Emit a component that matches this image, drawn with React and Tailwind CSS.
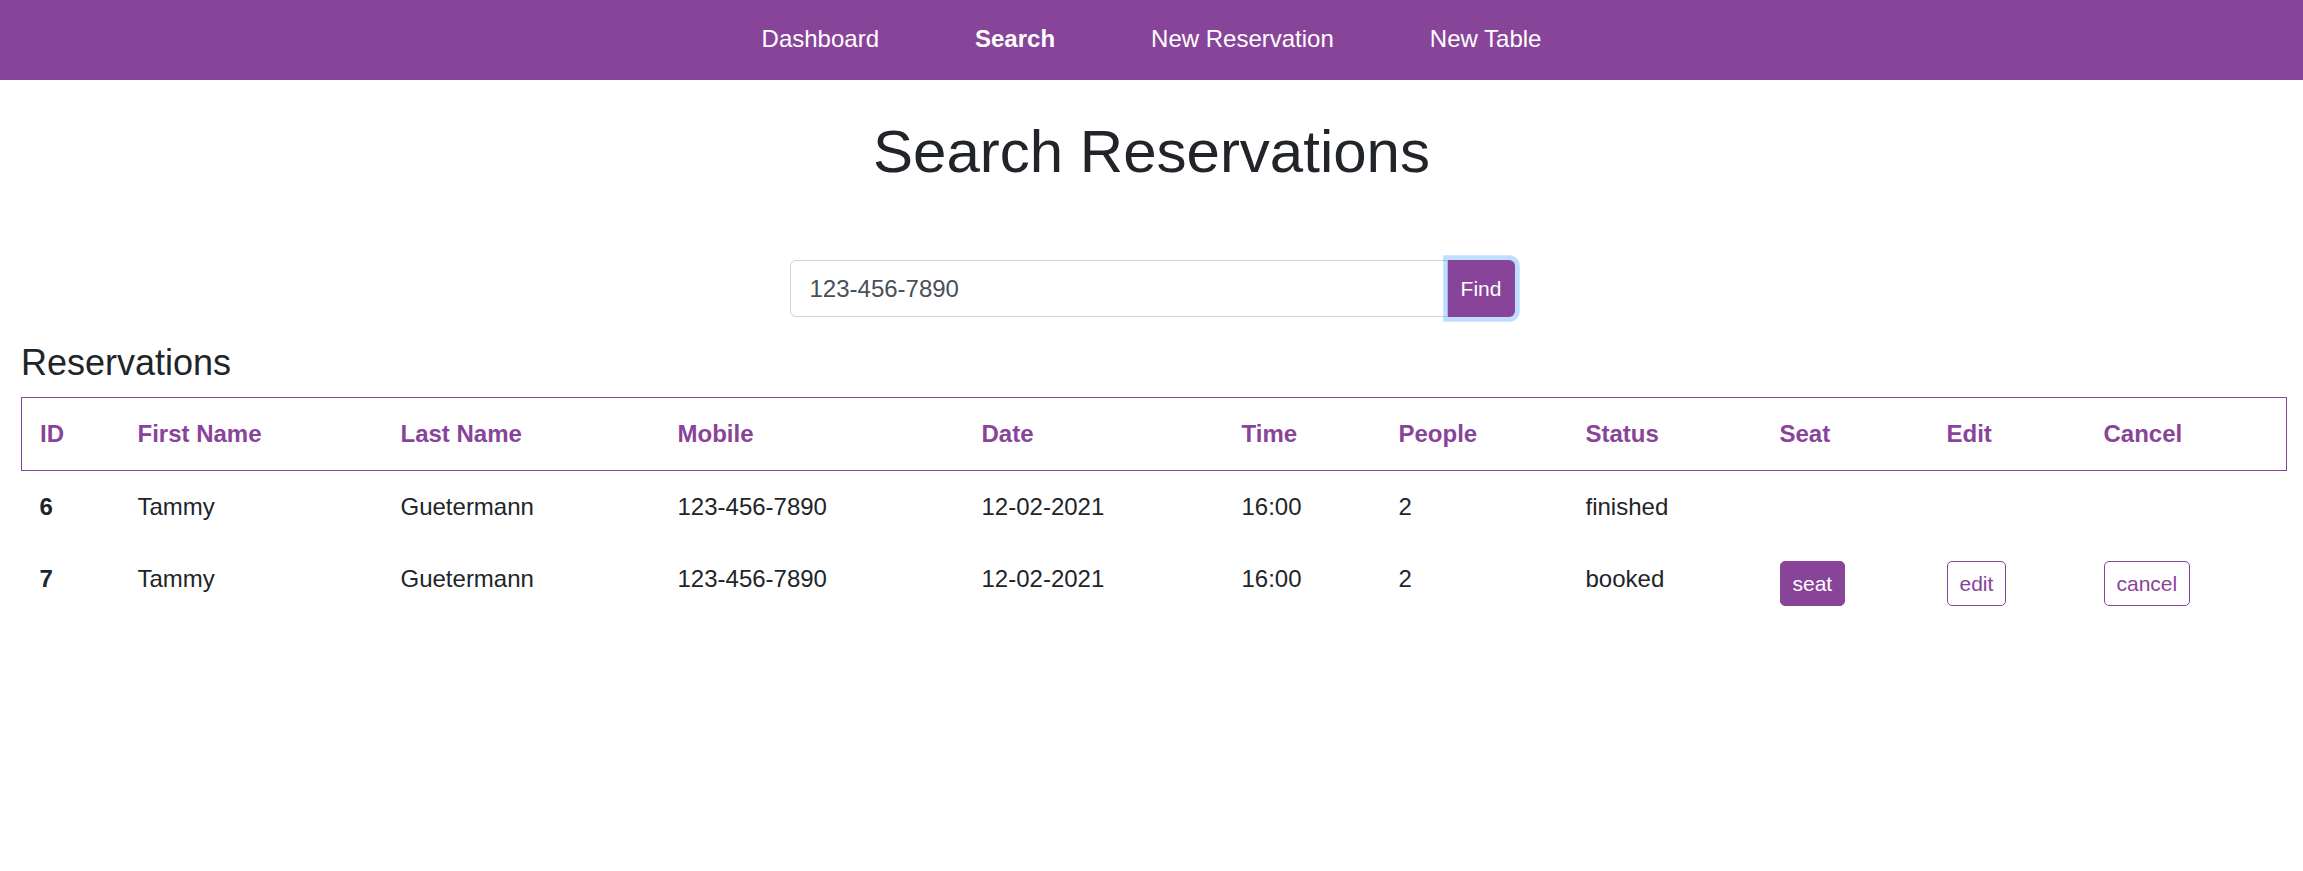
import React from "react";

const columns = [
  { label: "ID", w: "w-[98px]" },
  { label: "First Name", w: "w-[263px]" },
  { label: "Last Name", w: "w-[277px]" },
  { label: "Mobile", w: "w-[304px]" },
  { label: "Date", w: "w-[260px]" },
  { label: "Time", w: "w-[157px]" },
  { label: "People", w: "w-[187px]" },
  { label: "Status", w: "w-[194px]" },
  { label: "Seat", w: "w-[167px]" },
  { label: "Edit", w: "w-[157px]" },
  { label: "Cancel", w: "w-[201px]" },
];

const reservations = [
  { id: 6, first: "Tammy", last: "Guetermann", mobile: "123-456-7890", date: "12-02-2021", time: "16:00", people: 2, status: "finished" },
  { id: 7, first: "Tammy", last: "Guetermann", mobile: "123-456-7890", date: "12-02-2021", time: "16:00", people: 2, status: "booked" },
];

function NavBar() {
  const links = ["Dashboard", "Search", "New Reservation", "New Table"];
  return (
    <nav className="h-[80px] pb-[3px] bg-[#884499] flex items-center justify-center">
      {links.map((l) => (
        <a
          key={l}
          href="#"
          className={`px-[48px] text-[24px] leading-[36px] text-white ${l === "Search" ? "font-bold" : ""}`}
        >
          {l}
        </a>
      ))}
    </nav>
  );
}

function ReservationRow({ r }) {
  const cell = "px-[18px] py-[18px] align-top text-left";
  return (
    <tr>
      <th className={`${cell} font-bold`}>{r.id}</th>
      <td className={cell}>{r.first}</td>
      <td className={cell}>{r.last}</td>
      <td className={cell}>{r.mobile}</td>
      <td className={cell}>{r.date}</td>
      <td className={cell}>{r.time}</td>
      <td className={cell}>{r.people}</td>
      <td className={cell}>{r.status}</td>
      <td className={cell}>
        {r.status === "booked" && (
          <button className="px-[12px] py-[6px] text-[21px] leading-[31px] bg-[#884499] border border-[#884499] text-white rounded-[5px]">
            seat
          </button>
        )}
      </td>
      <td className={cell}>
        {r.status === "booked" && (
          <button className="px-[12px] py-[6px] text-[21px] leading-[31px] bg-white border border-[#884499] text-[#884499] rounded-[5px]">
            edit
          </button>
        )}
      </td>
      <td className={cell}>
        {r.status === "booked" && (
          <button className="px-[12px] py-[6px] text-[21px] leading-[31px] bg-white border border-[#884499] text-[#884499] rounded-[5px]">
            cancel
          </button>
        )}
      </td>
    </tr>
  );
}

export default function App() {
  return (
    <div className="min-h-[871px] bg-white text-[#212529] font-['Liberation_Sans',Arial,sans-serif]">
      <NavBar />

      <h1 className="mt-[36px] text-center text-[60px] leading-[72px] font-normal">
        Search Reservations
      </h1>

      <form className="mt-[72px] flex justify-center" onSubmit={(e) => e.preventDefault()}>
        <div className="flex h-[57px] pl-[1px]">
          <input
            type="text"
            readOnly
            value="123-456-7890"
            className="w-[658px] h-[57px] pl-[19px] pr-[18px] text-[24px] text-[#495057] border border-[#ced4da] rounded-l-[6px] outline-none"
          />
          <button
            type="submit"
            className="relative z-10 w-[67px] h-[57px] flex items-center justify-center text-[21px] text-white bg-[#884499] rounded-r-[6px] shadow-[0_0_0_4.8px_rgba(0,123,255,0.25)]"
          >
            Find
          </button>
        </div>
      </form>

      <div className="pl-[21px] pr-[17px]">
        <h4 className="mt-[24px] text-[36px] leading-[43px] font-normal">Reservations</h4>
        <table className="mt-[13px] w-full table-fixed border-collapse text-[24px] leading-[36px]">
          <thead>
            <tr className="border border-[#884499]">
              {columns.map((c) => (
                <th
                  key={c.label}
                  className={`${c.w} px-[18px] py-[18px] text-left font-bold text-[#884499]`}
                >
                  {c.label}
                </th>
              ))}
            </tr>
          </thead>
          <tbody>
            {reservations.map((r) => (
              <ReservationRow key={r.id} r={r} />
            ))}
          </tbody>
        </table>
      </div>
    </div>
  );
}
